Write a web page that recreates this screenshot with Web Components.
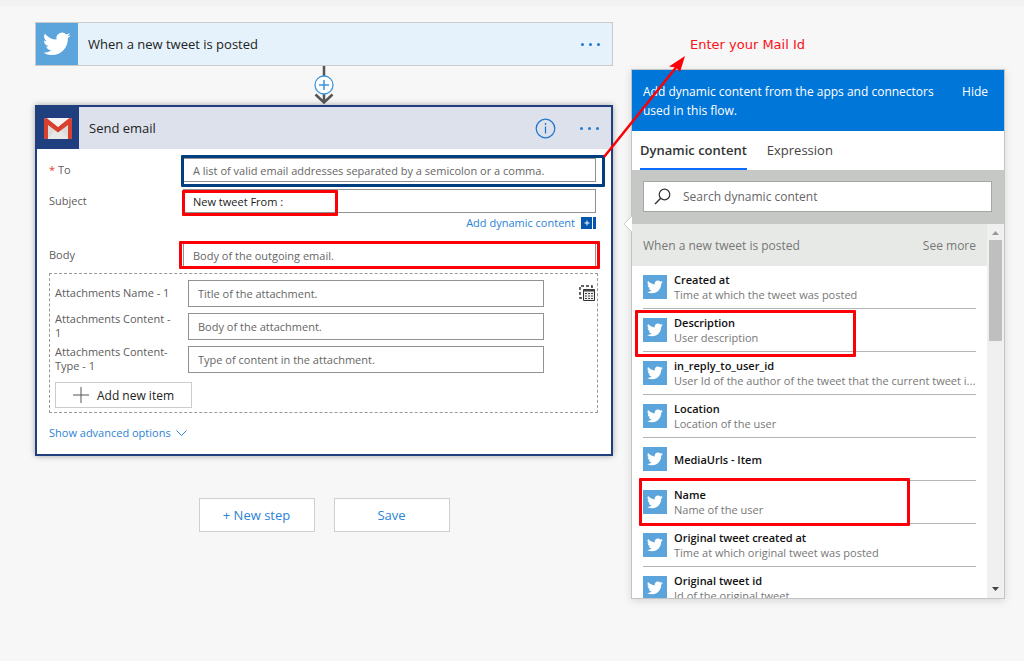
<!DOCTYPE html>
<html lang="en">
<head>
<meta charset="utf-8">
<title>Flow designer</title>
<style>
  html, body { margin: 0; min-height: 100%; }
  body { background: #f7f7f7; font-family: "Open Sans", "Noto Sans", sans-serif; color: #222; }
</style>
</head>
<body>
<flow-designer></flow-designer>

<script>
const define = (name, html, setup) => {
  const t = document.createElement('template');
  t.innerHTML = `<style>*{box-sizing:border-box}button,input{font-family:inherit;margin:0;border-radius:0}a{text-decoration:none}</style>` + html;
  customElements.define(name, class extends HTMLElement {
    constructor() {
      super();
      this.attachShadow({ mode: 'open' }).append(t.content.cloneNode(true));
    }
    connectedCallback() { if (setup) setup(this, this.shadowRoot); }
  });
};

define('twitter-icon', `
<style>
  :host { display: flex; align-items: center; justify-content: center; background: #5ba5dc; width: var(--size, 24px); height: var(--size, 24px); flex: none; }
  svg { width: 66%; height: 66%; display: block; }
</style>
<svg viewBox="0 0 24 24" aria-hidden="true"><path fill="#fff" d="M23.95 4.57a10 10 0 0 1-2.82.77 4.96 4.96 0 0 0 2.16-2.72c-.95.55-2 .96-3.13 1.18a4.92 4.92 0 0 0-8.38 4.48C7.69 8.09 4.07 6.13 1.64 3.16a4.93 4.93 0 0 0 1.52 6.57 4.9 4.9 0 0 1-2.23-.61v.06a4.92 4.92 0 0 0 3.95 4.83 5 5 0 0 1-2.21.08 4.94 4.94 0 0 0 4.6 3.42A9.87 9.87 0 0 1 0 19.54a13.99 13.99 0 0 0 7.55 2.21c9.05 0 14-7.5 14-13.98 0-.21 0-.42-.02-.63a9.94 9.94 0 0 0 2.46-2.55z"/></svg>`);

define('gmail-icon', `
<style>
  :host { display: flex; align-items: center; justify-content: center; background: #1f3f7f; width: 42px; height: 42px; flex: none; }
  svg { width: 28px; height: 21px; display: block; }
</style>
<svg viewBox="0 0 28 21" aria-hidden="true">
  <rect width="28" height="21" rx="2" fill="#ececec"/>
  <path d="M4 21V6l10 8 10-8v15z" fill="#dcdcdc"/>
  <path d="M4 21l7-9 3 2 3-2 7 9z" fill="#e8e8e6"/>
  <path d="M0 2v17.500a1.500 1.500 0 0 0 1.500 1.500H4V7l10 7.500L24 7v14h2.500a1.500 1.500 0 0 0 1.500-1.500V2c0-1-.8-2-2-2h-.8L14 9 2.800 0H2C.8 0 0 1 0 2z" fill="#d8402f"/>
  <path d="M3 0h22L14 8.800z" fill="#f4f4f4"/>
</svg>`);

define('more-button', `
<style>
  :host { display: block; }
  button { display: flex; gap: 5px; padding: 8px 0; border: 0; background: none; }
  i { width: 3px; height: 3px; border-radius: 50%; background: #1f78d1; }
</style>
<button type="button" aria-label="More"><i></i><i></i><i></i></button>`);

define('mark-box', `
<style>
  :host { display: block; position: absolute; z-index: 2; border: 3px solid #fb0007; border-radius: 1px; pointer-events: none; }
  :host([tone="navy"]) { border-color: #003f7f; }
</style>`);

define('trigger-card', `
<style>
  :host { display: flex; align-items: center; border: 1px solid #cbcbcb; background: #e5f2fb; height: 44px; --size: 42px; }
  span { flex: 1; padding-left: 10px; font-size: 13px; line-height: 20px; }
  more-button { margin-right: 12px; }
</style>
<twitter-icon></twitter-icon><span><slot></slot></span><more-button></more-button>`);

define('step-connector', `
<style>
  :host { display: flex; justify-content: center; height: 39px; }
  svg { display: block; }
</style>
<svg width="22" height="39" viewBox="0 0 22 39" fill="none" aria-hidden="true">
  <path d="M11 0V37M2.500 28.500l8.500 8 8.500-8" stroke="#555" stroke-width="2.500"/>
  <circle cx="11" cy="19" r="9" fill="#fff" stroke="#3b95dd" stroke-width="1.300"/>
  <path d="M11 14v10M6 19h10" stroke="#3b95dd" stroke-width="1.500"/>
</svg>`);

define('form-field', `
<style>
  :host { display: grid; grid-template-columns: var(--label, 134px) minmax(0, 1fr); align-items: center; font-size: 11px; }
  label { color: #5c5c5c; line-height: 14px; padding-right: 14px; }
  b { color: #e03c3c; font-weight: 400; display: none; }
  :host([required]) b { display: inline; }
  input { display: block; width: 100%; height: var(--height, 24px); border: 1px solid #929292; background: #fff; padding: 0 9px; font-size: 11px; color: #222; outline: 0; }
  input::placeholder { color: #666; opacity: 1; }
  div { position: relative; }
</style>
<label for="f"><b>* </b><span></span></label>
<div><input id="f" type="text"><slot></slot></div>`, (el, root) => {
  root.querySelector('label span').textContent = el.getAttribute('label');
  const input = root.querySelector('input');
  input.placeholder = el.getAttribute('placeholder') || '';
  input.value = el.getAttribute('value') || '';
});

define('attachment-group', `
<style>
  :host { display: block; position: relative; border: 1px dashed #999; padding: 5px 53px 4px 5px; --label: 133px; --height: 27px; }
  form-field { margin-bottom: 5px; min-height: 28px; }
  .add { display: flex; align-items: center; justify-content: center; gap: 8px; width: 137px; height: 26px; margin-top: 9px; border: 1px solid #ccc; background: #fff; font-size: 12px; color: #222; padding: 0; }
  .swap { position: absolute; right: 2px; top: 11px; border: 0; background: none; padding: 0; }
  svg { display: block; }
</style>
<form-field label="Attachments Name - 1" placeholder="Title of the attachment."></form-field>
<form-field label="Attachments Content - 1" placeholder="Body of the attachment."></form-field>
<form-field label="Attachments Content-Type - 1" placeholder="Type of content in the attachment."></form-field>
<button class="add" type="button"><svg width="16" height="16" viewBox="0 0 16 16" aria-hidden="true"><path d="M8 0v16M0 8h16" stroke="#555"/></svg>Add new item</button>
<button class="swap" type="button" aria-label="Switch to input entire array"><svg width="16" height="16" viewBox="0 0 16 16" fill="none" aria-hidden="true">
  <path d="M13 3V1H1v12h3" stroke="#333" stroke-width="1.500" stroke-dasharray="3 2"/>
  <path d="M4.500 4.500h11v11h-11z" fill="#eee" stroke="#333"/><path d="M4.500 5.500h11" stroke="#444" stroke-width="2"/>
  <path d="M6 8.500h2m1 0h2m1 0h2M6 11h2m1 0h2m1 0h2M6 13.500h2m1 0h2m1 0h2" stroke="#444"/>
</svg></button>`);

define('email-card', `
<style>
  :host { display: block; border: 2px solid #1f3f7f; background: #fff; box-shadow: 0 0 6px #0005; }
  header { display: flex; align-items: center; background: #dde1ec; height: 42px; }
  h2 { flex: 1; margin: 0; padding-left: 10px; font-size: 13px; font-weight: 400; line-height: 20px; }
  .info { border: 0; background: none; padding: 0; margin-right: 24px; }
  more-button { margin-right: 12px; }
  svg { display: block; }
  form { padding: 9px 13px 12px 12px; }
  form > form-field { margin-right: 2px; }
  .subject { margin-top: 7px; }
  .body { margin-top: 11px; margin-bottom: 6px; }
  a { display: flex; align-items: center; gap: 6px; color: #2b83d6; font-size: 11px; line-height: 18px; }
  .dynamic { justify-content: flex-end; margin: 1px 2px 0 0; }
  .advanced { margin-top: 11px; gap: 5px; }
  .m1 { inset: -3px -9px -5px -2px; }
  .m2 { top: 1px; bottom: -3px; left: -1px; width: 156px; }
  .m3 { inset: -2px -4px -2px -4px; }
</style>
<header><gmail-icon></gmail-icon><h2>Send email</h2>
  <button class="info" type="button" aria-label="Information"><svg width="21" height="21" viewBox="0 0 21 21" fill="none" aria-hidden="true"><circle cx="10.500" cy="10.500" r="9.300" stroke="#1f78d1" stroke-width="1.300"/><path d="M10.500 8.500v7M10.500 5v2" stroke="#1f78d1" stroke-width="1.300"/></svg></button>
  <more-button></more-button></header>
<form>
  <form-field required label="To" placeholder="A list of valid email addresses separated by a semicolon or a comma."><mark-box class="m1" tone="navy"></mark-box></form-field>
  <form-field class="subject" label="Subject" value="New tweet From :"><mark-box class="m2"></mark-box></form-field>
  <a class="dynamic" href="#">Add dynamic content<svg width="15" height="12" viewBox="0 0 15 12" aria-hidden="true"><path fill="#0057ad" d="M0 0h11v12H0zM12 0h3v12h-3z"/><path d="M6 3.500v5M3.500 6h5" stroke="#fff"/></svg></a>
  <form-field class="body" label="Body" placeholder="Body of the outgoing email."><mark-box class="m3"></mark-box></form-field>
  <attachment-group></attachment-group>
  <a class="advanced" href="#">Show advanced options<svg width="11" height="7" viewBox="0 0 11 7" fill="none" aria-hidden="true"><path d="M.5.5l5 5 5-5" stroke="#2b83d6"/></svg></a>
</form>`);

define('flow-actions', `
<style>
  :host { display: flex; justify-content: center; gap: 19px; }
  button { width: 116px; height: 34px; border: 1px solid #cfcfcf; background: #fff; color: #2b83d6; font-size: 13px; padding: 0; }
</style>
<button type="button">+ New step</button><button type="button">Save</button>`);

define('token-item', `
<style>
  :host { display: flex; align-items: center; gap: 7px; position: relative; height: 43px; margin: 0 11px; border-bottom: 1px solid #b5b5b5; font-size: 11px; line-height: 15px; }
  div { min-width: 0; }
  b, span { display: block; white-space: nowrap; }
  b { font-weight: 600; color: #111; }
  span { color: #777; }
</style>
<twitter-icon></twitter-icon><div><b></b><span></span></div><slot></slot>`, (el, root) => {
  root.querySelector('b').textContent = el.getAttribute('name');
  const note = el.getAttribute('note');
  if (note) root.querySelector('span').textContent = note; else root.querySelector('span').remove();
});

define('content-panel', `
<style>
  :host { display: block; position: relative; border: 1px solid #c4c4c4; background: #fff; box-shadow: 0 2px 8px #0002; }
  header { display: flex; align-items: flex-start; justify-content: space-between; background: #0076d9; color: #fff; padding: 12px 16px 11px 11px; font-size: 12px; line-height: 19px; }
  p { margin: 0; max-width: 300px; }
  header a { color: #fff; }
  nav { display: flex; gap: 20px; padding: 0 8px; height: 39px; font-size: 13px; line-height: 18px; }
  nav button { border: 0; border-bottom: 2px solid transparent; background: none; padding: 0; font-size: 13px; color: #444; }
  nav .on { font-weight: 600; color: #333; border-color: #0b6cff; }
  .search { display: flex; background: #c6c8c5; padding: 11px 12px 12px 11px; }
  label { display: flex; flex: 1; align-items: center; gap: 12px; height: 31px; background: #fff; border: 1px solid #a6a6a6; padding-left: 10px; }
  input { flex: 1; min-width: 0; border: 0; padding: 0; background: none; outline: 0; font-size: 12px; }
  input::placeholder { color: #666; opacity: 1; }
  .scroll { display: flex; height: 374px; }
  .list { flex: 1; min-width: 0; overflow: hidden; }
  .section { display: flex; align-items: center; justify-content: space-between; height: 42px; padding: 0 11px; background: #e7e9e6; color: #777; font-size: 12px; }
  .section a { color: #777; }
  .bar { width: 17px; background: #f0f0f0; display: flex; flex-direction: column; align-items: center; justify-content: space-between; padding: 7px 0; }
  .thumb { width: 13px; height: 101px; background: #bfbfbf; margin: 5px 0 auto; }
  .notch { position: absolute; left: -9px; top: 146px; }
  svg { display: block; }
  .d { inset: 1px auto -6px -8px; width: 221px; }
  .n { inset: -3px auto -3px -4px; width: 271px; }
</style>
<svg class="notch" width="9" height="16" viewBox="0 0 9 16" aria-hidden="true"><path d="M9 0L1 8l8 8" fill="#fff" stroke="#ccc"/></svg>
<header><p>Add dynamic content from the apps and connectors used in this flow.</p><a href="#">Hide</a></header>
<nav><button class="on" type="button">Dynamic content</button><button type="button">Expression</button></nav>
<div class="search"><label><svg width="17" height="17" viewBox="0 0 17 17" fill="none" aria-hidden="true"><circle cx="10.500" cy="6.500" r="5.300" stroke="#333" stroke-width="1.200"/><path d="M6.700 10.300L1 16" stroke="#333" stroke-width="1.400"/></svg><input type="search" placeholder="Search dynamic content" aria-label="Search dynamic content"></label></div>
<div class="scroll"><div class="list">
  <div class="section"><span>When a new tweet is posted</span><a href="#">See more</a></div>
  <token-item name="Created at" note="Time at which the tweet was posted"></token-item>
  <token-item name="Description" note="User description"><mark-box class="d"></mark-box></token-item>
  <token-item name="in_reply_to_user_id" note="User Id of the author of the tweet that the current tweet i..."></token-item>
  <token-item name="Location" note="Location of the user"></token-item>
  <token-item name="MediaUrls - Item"></token-item>
  <token-item name="Name" note="Name of the user"><mark-box class="n"></mark-box></token-item>
  <token-item name="Original tweet created at" note="Time at which original tweet was posted"></token-item>
  <token-item name="Original tweet id" note="Id of the original tweet"></token-item>
</div>
<div class="bar" aria-hidden="true"><svg width="7" height="4" viewBox="0 0 7 4"><path d="M0 4l3.500-4L7 4z" fill="#999"/></svg><i class="thumb"></i><svg width="7" height="4" viewBox="0 0 7 4"><path d="M0 0l3.500 4L7 0z" fill="#444"/></svg></div></div>`);

define('callout-note', `
<style>
  :host { display: block; position: relative; padding: 13px 0 15px 59px; color: #fb1018; font: 13px/19px "DejaVu Sans", sans-serif; }
  svg { position: absolute; left: -29px; top: 32px; z-index: 3; pointer-events: none; }
</style>
<slot></slot>
<svg width="84" height="106" viewBox="0 0 84 106" aria-hidden="true"><path d="M2 103L76 11" stroke="#fb0007" stroke-width="2.500"/><path d="M83 2l-5 16-4-4.500-7-1z" fill="#fb0007"/></svg>`);

define('flow-designer', `
<style>
  :host { display: block; border-top: 6px solid #f2f2f2; }
  main { display: grid; grid-template-columns: minmax(0, 578fr) minmax(0, 374fr); gap: 18px; padding: 16px 19px 24px 35px; align-items: start; }
  flow-actions { margin-top: 42px; }
</style>
<main>
  <section>
    <trigger-card>When a new tweet is posted</trigger-card>
    <step-connector></step-connector>
    <email-card></email-card>
    <flow-actions></flow-actions>
  </section>
  <aside>
    <callout-note>Enter your Mail Id</callout-note>
    <content-panel></content-panel>
  </aside>
</main>`);
</script>
</body>
</html>
